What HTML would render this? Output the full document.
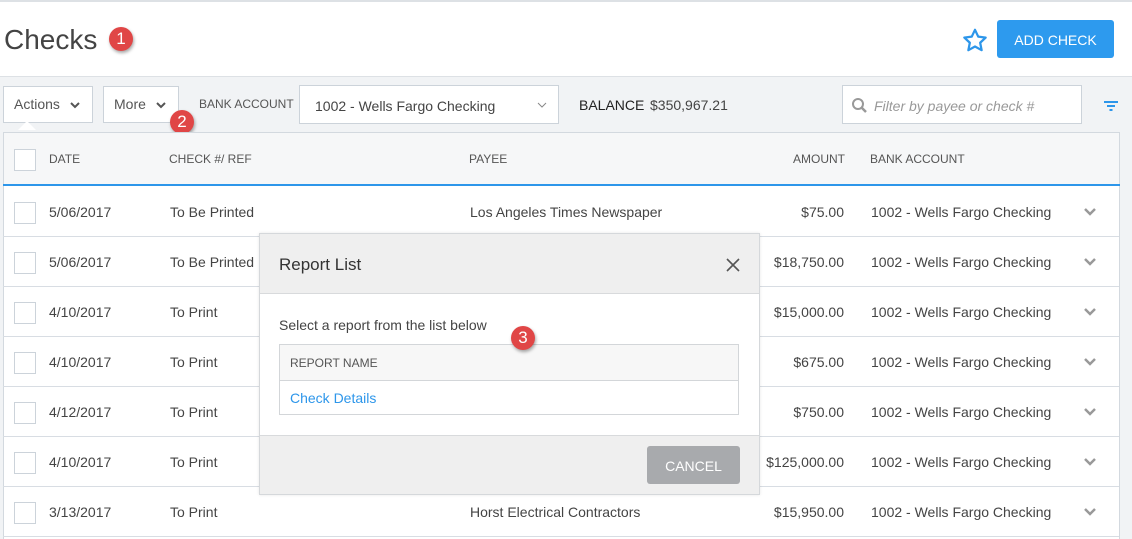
<!DOCTYPE html>
<html><head><style>
*{box-sizing:border-box;margin:0;padding:0}
html,body{width:1132px;height:539px;overflow:hidden}
body{background:#fff;font-family:"Liberation Sans",sans-serif;color:#444;position:relative}
.abs{position:absolute}
.badge{position:absolute;width:24px;height:24px;border-radius:50%;background:#e04646;color:#fff;font-size:17px;text-align:center;line-height:24px;box-shadow:1px 2px 3px rgba(0,0,0,.35)}
.btn{position:absolute;background:#fff;border:1px solid #ccd3da;font-size:14px;color:#555;padding-left:10px;line-height:35px}
.hd{position:absolute;font-size:12px;color:#555;top:152px}
.row{position:absolute;left:3px;width:1116px;height:50px;border-bottom:1px solid #d8dde3;font-size:14px;color:#444}
.row span{position:absolute;top:17px}
.cb{position:absolute;left:11px;top:15px;width:22px;height:22px;border:1px solid #ccd3da;background:#fff}
.chev{position:absolute;left:1080px;top:20px}
</style></head><body>
<div class="abs" style="left:0;top:0;width:1132px;height:2px;background:#dde1e5"></div>
<div class="abs" style="left:4px;top:24px;font-size:28px;color:#444">Checks</div>
<div class="badge" style="left:109px;top:27px">1</div>
<svg class="abs" style="left:961px;top:27px" width="28" height="27" viewBox="0 0 24 24"><path d="M12 2.5l2.9 6.1 6.6.8-4.9 4.6 1.3 6.6L12 17.3l-5.9 3.3 1.3-6.6-4.9-4.6 6.6-.8z" fill="none" stroke="#2d96ea" stroke-width="2" stroke-linejoin="round"/></svg>
<div class="abs" style="left:997px;top:20px;width:117px;height:38px;background:#2d9aee;border-radius:3px;color:#fff;font-size:14px;text-align:center;line-height:40px">ADD CHECK</div>
<div class="abs" style="left:0;top:76px;width:1132px;height:463px;background:#f1f3f5;border-top:1px solid #dde1e5"></div>
<div class="btn" style="left:3px;top:86px;width:90px;height:37px">Actions <svg width="10" height="8" style="margin-left:6px" viewBox="0 0 10 8"><path d="M1 2l4 4 4-4" stroke="#555" stroke-width="2" fill="none"/></svg></div>
<div class="btn" style="left:103px;top:86px;width:76px;height:37px">More <svg width="10" height="8" style="margin-left:6px" viewBox="0 0 10 8"><path d="M1 2l4 4 4-4" stroke="#555" stroke-width="2" fill="none"/></svg></div>
<div class="badge" style="left:170px;top:110px">2</div>
<div class="abs" style="left:199px;top:97px;font-size:12px;color:#555">BANK ACCOUNT</div>
<div class="btn" style="left:299px;top:85px;width:260px;height:39px;color:#444;padding-left:15px;line-height:40px">1002 - Wells Fargo Checking<svg class="abs" style="left:237px;top:16px" width="10" height="6" viewBox="0 0 10 6"><path d="M1 1l4 4 4-4" stroke="#888" fill="none"/></svg></div>
<div class="abs" style="left:579px;top:97px;font-size:14px;color:#222">BALANCE</div>
<div class="abs" style="left:650px;top:97px;font-size:14px;color:#444">$350,967.21</div>
<div class="btn" style="left:842px;top:85px;width:240px;height:39px;padding-left:31px;line-height:40px;color:#999;font-style:italic">Filter by payee or check #<svg class="abs" style="left:8px;top:11px" width="17" height="17" viewBox="0 0 17 17"><circle cx="7" cy="7" r="5" stroke="#999" stroke-width="2" fill="none"/><path d="M11 11l4 4" stroke="#999" stroke-width="2.5"/></svg></div>
<svg class="abs" style="left:1103px;top:100px" width="16" height="12" viewBox="0 0 16 12"><path d="M1 2h14M4 6h8M6.5 10h3" stroke="#2d96ea" stroke-width="2"/></svg>
<div class="abs" style="left:3px;top:132px;width:1117px;height:420px;background:#fff;border:1px solid #d3d9df"></div>
<div class="abs" style="left:4px;top:133px;width:1115px;height:52px;background:#f6f7f8"></div>
<div class="abs" style="left:18px;top:121px;width:0;height:0;border-left:9px solid transparent;border-right:9px solid transparent;border-bottom:9px solid #fff"></div>
<div class="abs" style="left:3px;top:184px;width:1117px;height:2px;background:#2d96ea"></div>
<div class="abs" style="left:14px;top:149px;width:22px;height:22px;border:1px solid #ccd3da;background:#fff"></div>
<div class="hd" style="left:49px">DATE</div>
<div class="hd" style="left:169px">CHECK #/ REF</div>
<div class="hd" style="left:469px">PAYEE</div>
<div class="hd" style="left:793px">AMOUNT</div>
<div class="hd" style="left:870px">BANK ACCOUNT</div>

<div class="row" style="top:187px"><div class="cb"></div><span style="left:46px">5/06/2017</span><span style="left:167px">To Be Printed</span><span style="left:467px">Los Angeles Times Newspaper</span><span style="right:275px">$75.00</span><span style="left:868px">1002 - Wells Fargo Checking</span><svg class="chev" width="14" height="9" viewBox="0 0 14 9"><path d="M2 2l5 5 5-5" stroke="#999" stroke-width="2.5" fill="none"/></svg></div>
<div class="row" style="top:237px"><div class="cb"></div><span style="left:46px">5/06/2017</span><span style="left:167px">To Be Printed</span><span style="right:275px">$18,750.00</span><span style="left:868px">1002 - Wells Fargo Checking</span><svg class="chev" width="14" height="9" viewBox="0 0 14 9"><path d="M2 2l5 5 5-5" stroke="#999" stroke-width="2.5" fill="none"/></svg></div>
<div class="row" style="top:287px"><div class="cb"></div><span style="left:46px">4/10/2017</span><span style="left:167px">To Print</span><span style="right:275px">$15,000.00</span><span style="left:868px">1002 - Wells Fargo Checking</span><svg class="chev" width="14" height="9" viewBox="0 0 14 9"><path d="M2 2l5 5 5-5" stroke="#999" stroke-width="2.5" fill="none"/></svg></div>
<div class="row" style="top:337px"><div class="cb"></div><span style="left:46px">4/10/2017</span><span style="left:167px">To Print</span><span style="right:275px">$675.00</span><span style="left:868px">1002 - Wells Fargo Checking</span><svg class="chev" width="14" height="9" viewBox="0 0 14 9"><path d="M2 2l5 5 5-5" stroke="#999" stroke-width="2.5" fill="none"/></svg></div>
<div class="row" style="top:387px"><div class="cb"></div><span style="left:46px">4/12/2017</span><span style="left:167px">To Print</span><span style="right:275px">$750.00</span><span style="left:868px">1002 - Wells Fargo Checking</span><svg class="chev" width="14" height="9" viewBox="0 0 14 9"><path d="M2 2l5 5 5-5" stroke="#999" stroke-width="2.5" fill="none"/></svg></div>
<div class="row" style="top:437px"><div class="cb"></div><span style="left:46px">4/10/2017</span><span style="left:167px">To Print</span><span style="right:275px">$125,000.00</span><span style="left:868px">1002 - Wells Fargo Checking</span><svg class="chev" width="14" height="9" viewBox="0 0 14 9"><path d="M2 2l5 5 5-5" stroke="#999" stroke-width="2.5" fill="none"/></svg></div>
<div class="row" style="top:487px"><div class="cb"></div><span style="left:46px">3/13/2017</span><span style="left:167px">To Print</span><span style="left:467px">Horst Electrical Contractors</span><span style="right:275px">$15,950.00</span><span style="left:868px">1002 - Wells Fargo Checking</span><svg class="chev" width="14" height="9" viewBox="0 0 14 9"><path d="M2 2l5 5 5-5" stroke="#999" stroke-width="2.5" fill="none"/></svg></div>

<div class="abs" style="left:259px;top:233px;width:501px;height:262px;background:#fff;border:1px solid #d5d8db;box-shadow:0 0 3px rgba(0,0,0,.1)">
 <div class="abs" style="left:0;top:0;width:499px;height:60px;background:#efefef;border-bottom:1px solid #d8dadc"></div>
 <div class="abs" style="left:19px;top:21px;font-size:17px;color:#333">Report List</div>
 <svg class="abs" style="left:466px;top:24px" width="14" height="14" viewBox="0 0 14 14"><path d="M1 1l12 12M13 1L1 13" stroke="#555" stroke-width="1.6"/></svg>
 <div class="abs" style="left:19px;top:83px;font-size:14px;color:#444">Select a report from the list below</div>
 <div class="abs" style="left:19px;top:110px;width:460px;height:71px;border:1px solid #d3d6d9">
  <div style="height:36px;background:#f7f7f7;border-bottom:1px solid #d3d6d9;font-size:12px;color:#555;padding:11px 0 0 10px">REPORT NAME</div>
  <div style="font-size:14px;color:#2d96ea;padding:9px 0 0 10px">Check Details</div>
 </div>
 <div class="abs" style="left:0;top:201px;width:499px;height:59px;background:#efefef;border-top:1px solid #d8dadc"></div>
 <div class="abs" style="left:387px;top:212px;width:93px;height:38px;background:#a8aaad;border-radius:3px;color:#fff;font-size:14px;text-align:center;line-height:40px">CANCEL</div>
</div>
<div class="badge" style="left:511px;top:326px">3</div>
</body></html>
